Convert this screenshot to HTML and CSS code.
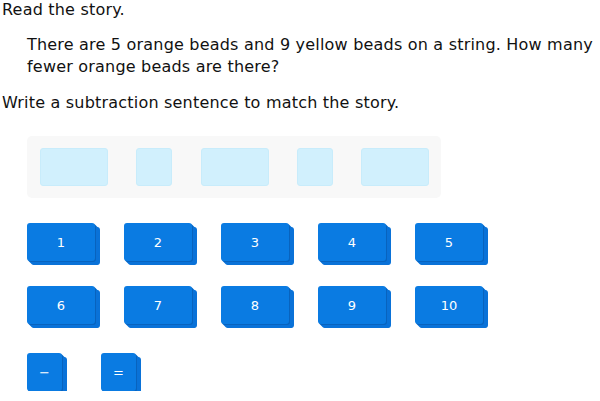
FILE: index.html
```html
<!DOCTYPE html>
<html>
<head>
<meta charset="utf-8">
<link rel="stylesheet" href="styles.css">
</head>
<body>
<p class="intro">Read the story.</p>
<p class="story">There are 5 orange beads and 9 yellow beads on a string. How many fewer orange beads are there?</p>
<p class="prompt">Write a subtraction sentence to match the story.</p>
<div class="answer">
  <div class="slot wide"></div>
  <div class="slot narrow"></div>
  <div class="slot wide"></div>
  <div class="slot narrow"></div>
  <div class="slot wide"></div>
</div>
<div class="tiles">
  <div class="row">
    <div class="tile">1</div>
    <div class="tile">2</div>
    <div class="tile">3</div>
    <div class="tile">4</div>
    <div class="tile">5</div>
  </div>
  <div class="row">
    <div class="tile">6</div>
    <div class="tile">7</div>
    <div class="tile">8</div>
    <div class="tile">9</div>
    <div class="tile">10</div>
  </div>
  <div class="row ops">
    <div class="tile op"><span class="sym">−</span></div>
    <div class="tile op"><span class="sym">=</span></div>
  </div>
</div>
</body>
</html>
```
FILE: styles.css
```css
html, body {
  margin: 0;
  padding: 0;
  background: #ffffff;
}
body {
  font-family: "DejaVu Sans", Verdana, sans-serif;
  font-size: 16px;
  letter-spacing: 0.2px;
  color: #111111;
}
.intro {
  margin: 0;
  padding-left: 2px;
  line-height: 19px;
}
.story {
  margin: 15px 0 0 0;
  padding-left: 27px;
  line-height: 22px;
}
.prompt {
  margin: 14px 0 0 0;
  padding-left: 2px;
  line-height: 22px;
}
.answer {
  margin: 22px 0 0 27px;
  width: 414px;
  height: 62px;
  box-sizing: border-box;
  padding: 12px 12px 11px 13px;
  background: #f8f8f8;
  border-radius: 5px;
  display: flex;
  justify-content: space-between;
}
.slot {
  height: 38px;
  background: #d1f0fd;
  border: 1px solid #c8ecfb;
  box-sizing: border-box;
  border-radius: 3px;
}
.slot.wide { width: 68px; }
.slot.narrow { width: 36px; }
.tiles {
  margin: 25px 0 0 27px;
  display: flex;
  flex-direction: column;
  gap: 25px;
}
.row {
  display: flex;
  gap: 29px;
}
.row.ops {
  gap: 39px;
  margin-top: 4px;
}
.tile {
  flex: none;
  width: 68px;
  height: 38px;
  background: #0a7be2;
  color: #ffffff;
  border-radius: 3px;
  font-size: 13px;
  letter-spacing: 0;
  display: flex;
  align-items: center;
  justify-content: center;
  box-shadow:
    1px 1px 0 #0863be,
    2px 2px 0 #0a72d8,
    3px 3px 0 #0a72d8,
    4px 4px 0 #0a72d8,
    5px 4px 0 #0a72d8;
}
.tile.op {
  width: 35px;
}
.sym {
  font-size: 13px;
  line-height: 1;
}
```
